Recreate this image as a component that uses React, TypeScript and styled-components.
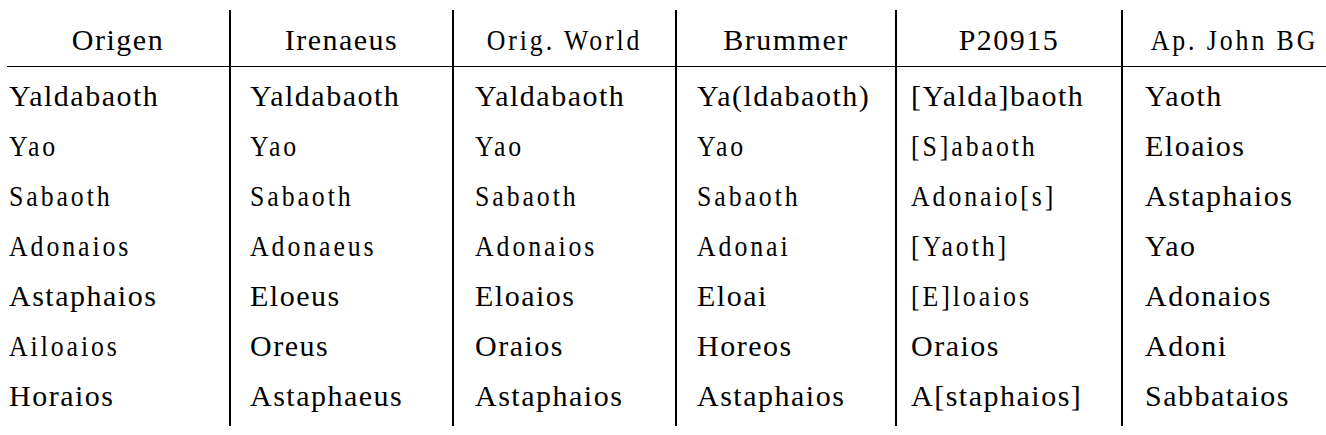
import styled, { createGlobalStyle } from "styled-components";

const GlobalStyle = createGlobalStyle`
  html, body {
    margin: 0;
    padding: 0;
    background: #ffffff;
    overflow: hidden;
  }
`;

type Entry = { text: string; narrow?: boolean };

type ColumnData = {
  title: Entry;
  width: number;
  pad: number;
  rows: Entry[];
};

const n = (text: string): Entry => ({ text, narrow: true });
const w = (text: string): Entry => ({ text });

// names of the archons, one column per source
const COLUMNS: ColumnData[] = [
  {
    title: w("Origen"),
    width: 222,
    pad: 2,
    rows: [w("Yaldabaoth"), n("Yao"), n("Sabaoth"), n("Adonaios"), w("Astaphaios"), n("Ailoaios"), w("Horaios")],
  },
  {
    title: w("Irenaeus"),
    width: 223,
    pad: 19,
    rows: [w("Yaldabaoth"), n("Yao"), n("Sabaoth"), n("Adonaeus"), w("Eloeus"), w("Oreus"), w("Astaphaeus")],
  },
  {
    title: n("Orig. World"),
    width: 223,
    pad: 21,
    rows: [w("Yaldabaoth"), n("Yao"), n("Sabaoth"), n("Adonaios"), w("Eloaios"), w("Oraios"), w("Astaphaios")],
  },
  {
    title: w("Brummer"),
    width: 220,
    pad: 20,
    rows: [w("Ya(ldabaoth)"), n("Yao"), n("Sabaoth"), n("Adonai"), w("Eloai"), w("Horeos"), w("Astaphaios")],
  },
  {
    title: w("P20915"),
    width: 226,
    pad: 14,
    rows: [w("[Yalda]baoth"), n("[S]abaoth"), n("Adonaio[s]"), n("[Yaoth]"), n("[E]loaios"), w("Oraios"), w("A[staphaios]")],
  },
  {
    title: n("Ap. John BG"),
    width: 225,
    pad: 22,
    rows: [w("Yaoth"), w("Eloaios"), w("Astaphaios"), w("Yao"), w("Adonaios"), w("Adoni"), w("Sabbataios")],
  },
];

const Page = styled.div`
  padding: 10px 0 0 7px;
  font-family: "Liberation Serif", Tinos, "Times New Roman", Times, "DejaVu Serif", serif;
  font-size: 30px;
  color: #000000;
`;

const Table = styled.div`
  display: flex;
  width: max-content;
`;

const Column = styled.div<{ $width: number; $first: boolean }>`
  display: flex;
  flex-direction: column;
  width: ${(p) => p.$width}px;
  box-sizing: border-box;
  border-left: ${(p) => (p.$first ? "none" : "2px solid #000")};
`;

const Head = styled.div`
  height: 57px;
  box-sizing: border-box;
  padding-top: 2px;
  line-height: 55px;
  text-align: center;
  border-bottom: 1px solid #000;
  white-space: nowrap;
`;

const Body = styled.div<{ $pad: number }>`
  padding: 4px 0 5px ${(p) => p.$pad}px;
`;

const Cell = styled.div`
  height: 50px;
  line-height: 50px;
  white-space: nowrap;
`;

const Word = styled.span<{ $narrow?: boolean; $center?: boolean }>`
  display: inline-block;
  letter-spacing: ${(p) => (p.$narrow ? "3.4px" : "1.5px")};
  transform: ${(p) => (p.$narrow ? "scaleX(0.86)" : "none")};
  transform-origin: ${(p) => (p.$center ? "center" : "left")};
`;

export default function App() {
  return (
    <>
      <GlobalStyle />
      <Page>
        <Table>
          {COLUMNS.map((col, i) => (
            <Column key={col.title.text} $width={col.width} $first={i === 0}>
              <Head>
                <Word $narrow={col.title.narrow} $center>
                  {col.title.text}
                </Word>
              </Head>
              <Body $pad={col.pad}>
                {col.rows.map((r, j) => (
                  <Cell key={j}>
                    <Word $narrow={r.narrow}>{r.text}</Word>
                  </Cell>
                ))}
              </Body>
            </Column>
          ))}
        </Table>
      </Page>
    </>
  );
}
